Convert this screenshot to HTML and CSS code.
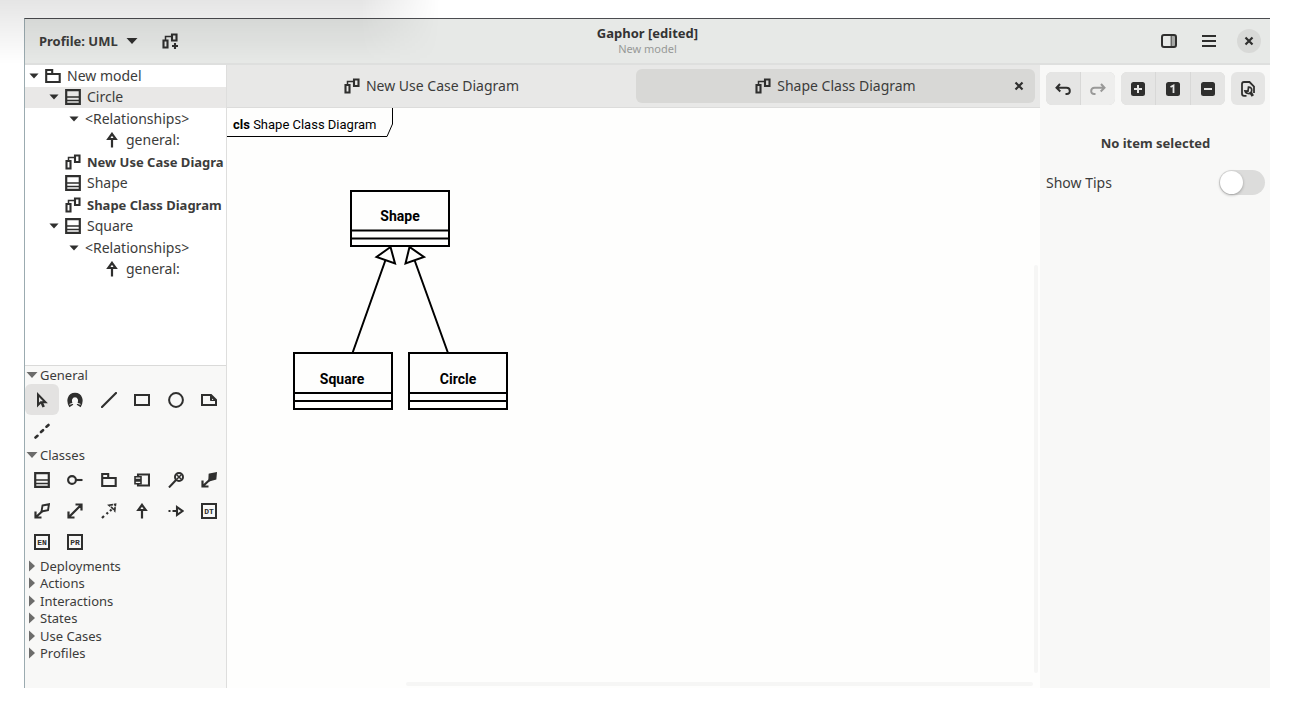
FILE: index.html
```html
<!DOCTYPE html>
<html lang="en">
<head>
<meta charset="utf-8">
<title>Gaphor [edited]</title>
<link rel="stylesheet" href="styles.css">
</head>
<body>
<svg class="sprite" aria-hidden="true">
  <defs>
    <symbol id="i-down" viewBox="0 0 12 8"><path d="M0.5 1h11L6 7z" fill="currentColor"/></symbol>
    <symbol id="i-right" viewBox="0 0 8 12"><path d="M1 0.5v11L7 6z" fill="currentColor"/></symbol>
    <symbol id="i-diagram" viewBox="0 0 16 16"><path d="M1.500 7h4v7.500h-4zM10 1.500h4.500v6.500h-4.500z" stroke-width="2.100"/><path d="M3.500 7V3.500h6" stroke-width="1.500"/></symbol>
    <symbol id="i-newdiagram" viewBox="0 0 16 16"><path d="M1.500 7.500h4v7h-4zM10 1.500h4.500v6h-4.500z" stroke-width="2.100"/><path d="M3.500 7V3.500h6" stroke-width="1.500"/><path d="M13 10v6M10 13h6" stroke-width="2.100"/></symbol>
    <symbol id="i-package" viewBox="0 0 16 16"><path d="M1.200 14v-12h6v4h7.500v8zM1.200 6h6" stroke-width="2.100"/></symbol>
    <symbol id="i-class" viewBox="0 0 16 16"><path d="M1.200 1.200h13.600v13.600h-13.600z" stroke-width="2.200"/><path d="M2 8h12M2 11.500h12" stroke-width="1.600"/></symbol>
    <symbol id="i-general" viewBox="0 0 16 16"><path d="M8 1.800l3.700 5.200H4.300zM8 7v8.500" stroke-width="2.200"/></symbol>
    <symbol id="i-pointer" viewBox="0 0 16 16"><path d="M4 2.500v10.500l2.800-2.800h4.700z" stroke-width="2"/><path d="M7.500 10l2.200 5" stroke-width="2.600"/></symbol>
    <symbol id="i-magnet" viewBox="0 0 16 16"><path d="M4.300 14C1 8.500 3 3 8 3s7 5.500 3.700 11" stroke-width="4.600"/><path d="M2.500 12.300l3.500-1M13.500 12.300l-3.500-1" stroke="#f8f8f7" stroke-width="1"/></symbol>
    <symbol id="i-line" viewBox="0 0 16 16"><path d="M1 15L15 1" stroke-width="2.100" stroke-linecap="round"/></symbol>
    <symbol id="i-box" viewBox="0 0 16 16"><path d="M1 3h14v10H1z" stroke-width="2"/></symbol>
    <symbol id="i-ellipse" viewBox="0 0 16 16"><circle cx="8" cy="8" r="6.900" stroke-width="2"/></symbol>
    <symbol id="i-note" viewBox="0 0 16 16"><path d="M1 3h9l5 5v5H1z" stroke-width="2"/><path d="M9.500 3.500V8.500H15z" fill="currentColor"/><path d="M11 6.500l1.500 1.500h-1.500z" fill="#f8f8f7" stroke="none"/></symbol>
    <symbol id="i-dashed" viewBox="0 0 16 16"><path d="M1.500 14.500l2-1.700M7 9l2-1.800M12.500 3.700L14.500 2" stroke-width="2.600" stroke-linecap="round"/></symbol>
    <symbol id="i-interface" viewBox="0 0 16 16"><circle cx="5" cy="8" r="3.900" stroke-width="2.100"/><path d="M9 8h6.500" stroke-width="2.100"/></symbol>
    <symbol id="i-component" viewBox="0 0 16 16"><path d="M4 5V2.500h11v11H4V12" stroke-width="2.100"/><path d="M1 4.800h6v2.700H1zM1 9h6v2.700H1z" stroke-width="1.600"/></symbol>
    <symbol id="i-contain" viewBox="0 0 16 16"><circle cx="11" cy="5" r="4" stroke-width="2"/><path d="M8.500 2.500l5 5M13.500 2.500l-5 5" stroke-width="1.500"/><path d="M8 8L1 15.500" stroke-width="2"/></symbol>
    <symbol id="i-composition" viewBox="0 0 16 16"><path d="M8.500 2.500L15 1.200l-.5 5.500L8.200 8.500z" fill="currentColor" stroke-width="1.800"/><path d="M8.500 8L1.500 14.500M1.500 8.500v6h6" stroke-width="2.200"/></symbol>
    <symbol id="i-aggregation" viewBox="0 0 16 16"><path d="M8.500 2.500L15 1.200l-1 6L7.500 8.500z" stroke-width="1.900"/><path d="M8 8.500L1.500 14.500M1.500 8.500v6h6" stroke-width="2.200"/></symbol>
    <symbol id="i-association" viewBox="0 0 16 16"><path d="M1.500 14.500L14.500 1.500M1.500 8.500v6h6M8.500 1.500h6v6" stroke-width="2.200"/></symbol>
    <symbol id="i-dependency" viewBox="0 0 16 16"><path d="M1 15l2-2M5.500 11l1.500-1.500M9 8l1.500-1.500" stroke-width="2.200"/><path d="M8 2.200l6.500-1-.8 6.500-2.400-2.700z" stroke-width="1.700" stroke-dasharray="4 .8"/></symbol>
    <symbol id="i-realization" viewBox="0 0 16 16"><path d="M0.500 8h2M4.500 8h4" stroke-width="2"/><path d="M9 4l5.500 4L9 12z" stroke-width="2.100"/></symbol>
    <symbol id="i-frame" viewBox="0 0 16 16"><path d="M1 1h14v14H1z" stroke-width="2"/></symbol>
    <symbol id="i-panel" viewBox="0 0 16 16"><path d="M11 3h3v10h-3z" fill="#a5a7a5" stroke="none"/><rect x="1" y="2" width="14" height="12" rx="2" stroke-width="2"/><path d="M10.200 3v10" stroke-width="1"/></symbol>
    <symbol id="i-menu" viewBox="0 0 16 16"><path d="M1 3h14M1 8h14M1 13h14" stroke-width="2"/></symbol>
    <symbol id="i-close" viewBox="0 0 16 16"><path d="M4.500 4.500l7 7M11.500 4.500l-7 7" stroke-width="2.200"/></symbol>
    <symbol id="i-undo" viewBox="0 0 16 16"><path d="M5 3L1.500 6.800l3.800 3.700M2 6.800h9.500q3.300 0 3.300 3.200T11.500 13H10.500" stroke-width="2"/></symbol>
    <symbol id="i-redo" viewBox="0 0 16 16"><path d="M11 3L14.500 6.800l-3.800 3.700M14 6.800H4.500Q1.200 6.800 1.200 10T4.500 13H5.500" stroke-width="2"/></symbol>
    <symbol id="i-zoomin" viewBox="0 0 16 16"><rect x="1" y="1" width="14" height="14" rx="2.500" fill="currentColor" stroke="none"/><path d="M8 4v8M4 8h8" stroke="#e6e6e5" stroke-width="2"/></symbol>
    <symbol id="i-zoomone" viewBox="0 0 16 16"><rect x="1" y="1" width="14" height="14" rx="2.500" fill="currentColor" stroke="none"/><path d="M5.500 6L8.500 4.500V12" stroke="#e6e6e5" stroke-width="1.800"/></symbol>
    <symbol id="i-zoomout" viewBox="0 0 16 16"><rect x="1" y="1" width="14" height="14" rx="2.500" fill="currentColor" stroke="none"/><path d="M4 8h8" stroke="#e6e6e5" stroke-width="2"/></symbol>
    <symbol id="i-prefs" viewBox="0 0 16 16"><path d="M6.500 14.800H4Q2 14.800 2 12.800V3Q2 1 4 1h5.500L14 5.500V12" stroke-width="1.800"/><path d="M10.300 11l2.500 4" stroke-width="2.800"/><path d="M8.500 6.200q3.500 0 3.200 3.300t-3.400 3q-2.600-.2-3.300-2.500l3 .2z" stroke-width="1.700"/></symbol>
  </defs>
</svg>

<div class="window">
  <header class="header">
    <div class="header-start">
      <button class="profile" type="button">Profile: UML <svg class="arrow"><use href="#i-down"/></svg></button>
      <button class="flat" type="button" aria-label="New diagram"><svg class="icon"><use href="#i-newdiagram"/></svg></button>
    </div>
    <div class="title">
      <h1>Gaphor [edited]</h1>
      <p>New model</p>
    </div>
    <div class="header-end">
      <button class="flat" type="button" aria-label="Toggle property editor"><svg class="icon"><use href="#i-panel"/></svg></button>
      <button class="flat" type="button" aria-label="Menu"><svg class="icon"><use href="#i-menu"/></svg></button>
      <button class="flat round" type="button" aria-label="Close window"><svg class="icon"><use href="#i-close"/></svg></button>
    </div>
  </header>

  <div class="body">
    <aside class="side">
      <nav class="tree-pane" aria-label="Model browser">
        <ul class="tree">
          <li class="row l1"><svg class="exp"><use href="#i-down"/></svg><svg class="icon"><use href="#i-package"/></svg>New model</li>
          <li class="row l2 selected"><svg class="exp"><use href="#i-down"/></svg><svg class="icon"><use href="#i-class"/></svg>Circle</li>
          <li class="row l3"><svg class="exp"><use href="#i-down"/></svg>&lt;Relationships&gt;</li>
          <li class="row l4"><span class="exp"></span><svg class="icon"><use href="#i-general"/></svg>general:</li>
          <li class="row l2 strong"><span class="exp"></span><svg class="icon"><use href="#i-diagram"/></svg>New Use Case Diagra</li>
          <li class="row l2"><span class="exp"></span><svg class="icon"><use href="#i-class"/></svg>Shape</li>
          <li class="row l2 strong"><span class="exp"></span><svg class="icon"><use href="#i-diagram"/></svg>Shape Class Diagram</li>
          <li class="row l2"><svg class="exp"><use href="#i-down"/></svg><svg class="icon"><use href="#i-class"/></svg>Square</li>
          <li class="row l3"><svg class="exp"><use href="#i-down"/></svg>&lt;Relationships&gt;</li>
          <li class="row l4"><span class="exp"></span><svg class="icon"><use href="#i-general"/></svg>general:</li>
        </ul>
      </nav>
      <section class="palette" aria-label="Toolbox">
        <button class="group" type="button" aria-expanded="true"><svg class="twist"><use href="#i-down"/></svg>General</button>
        <div class="tools">
          <button class="tool active" type="button" aria-label="Pointer"><svg class="icon"><use href="#i-pointer"/></svg></button>
          <button class="tool" type="button" aria-label="Magnet"><svg class="icon"><use href="#i-magnet"/></svg></button>
          <button class="tool" type="button" aria-label="Line"><svg class="icon"><use href="#i-line"/></svg></button>
          <button class="tool" type="button" aria-label="Box"><svg class="icon"><use href="#i-box"/></svg></button>
          <button class="tool" type="button" aria-label="Ellipse"><svg class="icon"><use href="#i-ellipse"/></svg></button>
          <button class="tool" type="button" aria-label="Comment"><svg class="icon"><use href="#i-note"/></svg></button>
          <button class="tool" type="button" aria-label="Comment line"><svg class="icon"><use href="#i-dashed"/></svg></button>
        </div>
        <button class="group" type="button" aria-expanded="true"><svg class="twist"><use href="#i-down"/></svg>Classes</button>
        <div class="tools">
          <button class="tool" type="button" aria-label="Class"><svg class="icon"><use href="#i-class"/></svg></button>
          <button class="tool" type="button" aria-label="Interface"><svg class="icon"><use href="#i-interface"/></svg></button>
          <button class="tool" type="button" aria-label="Package"><svg class="icon"><use href="#i-package"/></svg></button>
          <button class="tool" type="button" aria-label="Component"><svg class="icon"><use href="#i-component"/></svg></button>
          <button class="tool" type="button" aria-label="Containment"><svg class="icon"><use href="#i-contain"/></svg></button>
          <button class="tool" type="button" aria-label="Composition"><svg class="icon"><use href="#i-composition"/></svg></button>
          <button class="tool" type="button" aria-label="Shared association"><svg class="icon"><use href="#i-aggregation"/></svg></button>
          <button class="tool" type="button" aria-label="Association"><svg class="icon"><use href="#i-association"/></svg></button>
          <button class="tool" type="button" aria-label="Dependency"><svg class="icon"><use href="#i-dependency"/></svg></button>
          <button class="tool" type="button" aria-label="Generalization"><svg class="icon"><use href="#i-general"/></svg></button>
          <button class="tool" type="button" aria-label="Interface realization"><svg class="icon"><use href="#i-realization"/></svg></button>
          <button class="tool" type="button" aria-label="Data type"><svg class="icon"><use href="#i-frame"/><text class="mark" x="8" y="11">DT</text></svg></button>
          <button class="tool" type="button" aria-label="Enumeration"><svg class="icon"><use href="#i-frame"/><text class="mark" x="8" y="11">EN</text></svg></button>
          <button class="tool" type="button" aria-label="Primitive"><svg class="icon"><use href="#i-frame"/><text class="mark" x="8" y="11">PR</text></svg></button>
        </div>
        <div class="closed">
          <button class="group" type="button" aria-expanded="false"><svg class="twist"><use href="#i-right"/></svg>Deployments</button>
          <button class="group" type="button" aria-expanded="false"><svg class="twist"><use href="#i-right"/></svg>Actions</button>
          <button class="group" type="button" aria-expanded="false"><svg class="twist"><use href="#i-right"/></svg>Interactions</button>
          <button class="group" type="button" aria-expanded="false"><svg class="twist"><use href="#i-right"/></svg>States</button>
          <button class="group" type="button" aria-expanded="false"><svg class="twist"><use href="#i-right"/></svg>Use Cases</button>
          <button class="group" type="button" aria-expanded="false"><svg class="twist"><use href="#i-right"/></svg>Profiles</button>
        </div>
      </section>
    </aside>

    <main class="editor">
      <div class="tabs">
        <div class="tab"><button class="tab-label" type="button"><svg class="icon"><use href="#i-diagram"/></svg>New Use Case Diagram</button></div>
        <div class="tab current"><button class="tab-label" type="button"><svg class="icon"><use href="#i-diagram"/></svg>Shape Class Diagram</button><button class="tab-close" type="button" aria-label="Close tab"><svg class="icon"><use href="#i-close"/></svg></button></div>
      </div>
      <div class="canvas">
        <svg class="diagram" role="img" aria-label="Shape class diagram">
          <path class="thin" d="M0 28.500H160L165.500 16V0"/>
          <text class="caption" x="6" y="21"><tspan class="kind">cls</tspan> Shape Class Diagram</text>
          <g class="node">
            <path d="M124 83h98v55h-98zM124 122.500h98M124 130.500h98"/>
            <text x="173" y="113">Shape</text>
          </g>
          <g class="node">
            <path d="M67 245h98v56H67zM67 285h98M67 293h98"/>
            <text x="115" y="276">Square</text>
          </g>
          <g class="node">
            <path d="M182 245h98v56h-98zM182 285h98M182 293h98"/>
            <text x="231" y="276">Circle</text>
          </g>
          <path class="edge" d="M125.500 245L158.500 152M163.500 139L149.500 149L168 155.500z"/>
          <path class="edge" d="M221 245L187.500 152M182.500 139L178.500 155.500L197 149z"/>
        </svg>
        <span class="scroll-v"></span>
        <span class="scroll-h"></span>
      </div>
    </main>

    <aside class="props">
      <div class="toolbar">
        <div class="linked">
          <button type="button" aria-label="Undo"><svg class="icon"><use href="#i-undo"/></svg></button>
          <button type="button" aria-label="Redo" disabled><svg class="icon"><use href="#i-redo"/></svg></button>
        </div>
        <div class="linked">
          <button type="button" aria-label="Zoom in"><svg class="icon"><use href="#i-zoomin"/></svg></button>
          <button type="button" aria-label="Zoom 100%"><svg class="icon"><use href="#i-zoomone"/></svg></button>
          <button type="button" aria-label="Zoom out"><svg class="icon"><use href="#i-zoomout"/></svg></button>
        </div>
        <div class="linked">
          <button type="button" aria-label="Diagram preferences"><svg class="icon"><use href="#i-prefs"/></svg></button>
        </div>
      </div>
      <h2>No item selected</h2>
      <div class="tips">
        <label for="tips">Show Tips</label>
        <input id="tips" class="switch" type="checkbox" role="switch">
      </div>
    </aside>
  </div>
</div>
</body>
</html>
```
FILE: styles.css
```css
* { box-sizing: border-box; }

body {
  margin: 0;
  min-height: 100vh;
  padding: 18px 30px 14px 24px;
  display: flex;
  background: #fff;
  color: #3c3c3b;
  font: 14px/20px "Noto Sans", sans-serif;
  position: relative;
}

/* soft shade falling over the top left corner */
body::before {
  content: "";
  position: absolute;
  left: 0;
  top: 0;
  width: 440px;
  height: 64px;
  background: linear-gradient(rgba(0, 0, 0, .1), rgba(0, 0, 0, 0));
  mask-image: linear-gradient(to right, #000 82%, transparent);
  pointer-events: none;
  z-index: 2;
}

button {
  border: 0;
  padding: 0;
  background: none;
  color: inherit;
  font: inherit;
}

h1, h2, p, ul { margin: 0; padding: 0; }

.sprite { position: absolute; width: 0; height: 0; }

.icon {
  width: 16px;
  height: 16px;
  flex: none;
  display: block;
  color: #2f2f2e;
  fill: none;
  stroke: #2f2f2e;
}

.window {
  flex: 1;
  min-width: 0;
  display: flex;
  flex-direction: column;
  border-top: 1px solid #4b4c50;
  border-left: 1px solid #9babb0;
}

.header {
  min-height: 46px;
  display: grid;
  grid-template-columns: 1fr auto 1fr;
  align-items: center;
  background: #e7e9e7;
  border-bottom: 2px solid #dedfde;
}

.header-start { display: flex; align-items: center; gap: 20px; padding-left: 14px; }
.header-end { display: flex; align-items: center; justify-content: flex-end; gap: 16px; padding-right: 9px; }

.profile {
  display: flex;
  align-items: center;
  gap: 8px;
  font-size: 13px;
  font-weight: 700;
}

.arrow { width: 12px; height: 8px; color: #2f2f2e; }

.flat {
  width: 24px;
  height: 24px;
  display: grid;
  place-items: center;
}

.round { border-radius: 50%; background: #d8d9d7; }

.title { text-align: center; }
.title h1 { font-size: 13px; line-height: 16px; font-weight: 700; color: #333; }
.title p { font-size: 11px; line-height: 16px; color: #979997; }

.body {
  flex: 1;
  display: grid;
  grid-template-columns: 202px minmax(0, 1fr) 230px;
}

.side {
  display: flex;
  flex-direction: column;
  min-width: 0;
  border-right: 1px solid #dededd;
  background: #f8f8f7;
}

.tree-pane { min-height: 301px; background: #fff; border-bottom: 1px solid #dadad9; }

.tree {
  list-style: none;
  height: 215px;
  display: grid;
  grid-auto-rows: 1fr;
}

.row {
  display: flex;
  align-items: center;
  gap: 6px;
  min-height: 0;
  overflow: hidden;
  white-space: nowrap;
}

.l1 { padding-left: 4px; }
.l2 { padding-left: 24px; }
.l3 { padding-left: 44px; }
.l4 { padding-left: 63px; }
.selected { background: #e9e8e7; }
.strong { font-size: 13px; font-weight: 700; }
.exp { width: 10px; height: 8px; flex: none; color: #2f2f2e; }

.group {
  display: flex;
  align-items: center;
  gap: 2px;
  width: 100%;
  height: 18px;
  padding-left: 1px;
  font-size: 13px;
  line-height: 16px;
  text-align: left;
}

.twist { width: 12px; height: 12px; color: #6c6c6b; }

.tools {
  display: grid;
  grid-template-columns: repeat(6, 1fr);
  grid-auto-rows: 31px;
}

.tool { display: grid; place-items: center; border-radius: 6px; }
.tool.active { background: #e3e2e1; }

.mark {
  font: bold 8px "Liberation Mono", monospace;
  text-anchor: middle;
  fill: #2f2f2e;
  stroke: none;
}

.closed { display: grid; grid-auto-rows: 1fr; height: 105px; }
.closed .group { height: auto; }

.editor { display: flex; flex-direction: column; min-width: 0; background: #fefefd; }

.tabs {
  display: flex;
  gap: 5px;
  height: 43px;
  padding: 4px 5px;
  background: #e8e8e7;
  border-bottom: 1px solid #dcdcdb;
}

.tab {
  flex: 1;
  display: flex;
  justify-content: center;
  position: relative;
  height: 34px;
  border-radius: 6px;
}

.current { background: #d8d8d6; }
.tab-label { display: flex; align-items: center; gap: 6px; }
.tab-close { position: absolute; right: 8px; top: 9px; }

.canvas { flex: 1; position: relative; }

.diagram { position: absolute; width: 100%; height: 100%; overflow: hidden; fill: none; stroke: #000; }
.thin { stroke-width: 1; }
.node path { stroke-width: 2; fill: none; }
.edge { stroke-width: 2; }
.diagram text { font-family: Roboto, sans-serif; font-size: 14px; fill: #000; stroke: none; }
.diagram .caption { font-size: 13px; }
.node text { font-weight: 700; text-anchor: middle; }
.kind { font-weight: 700; }

.scroll-v, .scroll-h { position: absolute; background: #f6f6f5; border-radius: 2px; }
.scroll-v { right: 2px; top: 27%; bottom: 15px; width: 4px; }
.scroll-h { left: 22%; right: 7px; bottom: 2px; height: 4px; }

.props {
  padding: 7px 5px 0 6px;
  background: #f8f8f7;
}

.toolbar { display: flex; gap: 6px; }

.linked {
  display: flex;
  gap: 1px;
  border-radius: 6px;
  overflow: hidden;
  background: #d8d8d7;
}

.linked button {
  width: 34px;
  height: 33px;
  display: grid;
  place-items: center;
  background: #e5e5e4;
}

.linked button:disabled { background: #eeeeed; }
.linked button:disabled .icon { stroke: #999998; }

.props h2 {
  margin-top: 28px;
  font-size: 13px;
  line-height: 20px;
  font-weight: 700;
  text-align: center;
}

.tips { display: flex; align-items: center; justify-content: space-between; margin-top: 17px; }

.switch {
  appearance: none;
  margin: 0;
  width: 46px;
  height: 25px;
  border-radius: 13px;
  background: #dcdcdb;
}

.switch::before {
  content: "";
  display: block;
  width: 23px;
  height: 23px;
  margin: 1px;
  border-radius: 50%;
  background: #fff;
  box-shadow: 0 1px 3px rgba(0, 0, 0, .3);
}
```
